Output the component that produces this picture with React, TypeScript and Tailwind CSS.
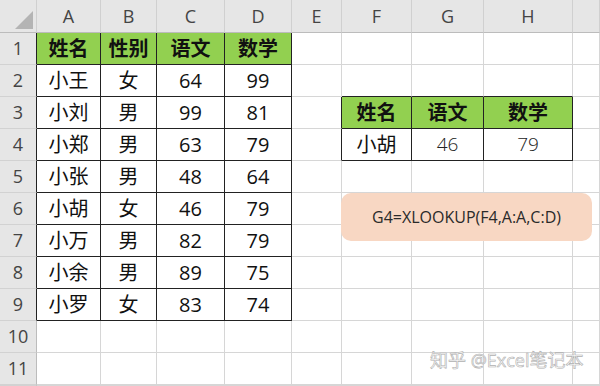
import React from 'react';

type Cell = { text: string; head?: boolean; light?: boolean };

const COLS = ['A', 'B', 'C', 'D', 'E', 'F', 'G', 'H', ''];
const ROWS = [1, 2, 3, 4, 5, 6, 7, 8, 9, 10, 11, 12];

// main score table A1:D9
const TABLE: string[][] = [
  ['姓名', '性别', '语文', '数学'],
  ['小王', '女', '64', '99'],
  ['小刘', '男', '99', '81'],
  ['小郑', '男', '63', '79'],
  ['小张', '男', '48', '64'],
  ['小胡', '女', '46', '79'],
  ['小万', '男', '82', '79'],
  ['小余', '男', '89', '75'],
  ['小罗', '女', '83', '74'],
];

function cellAt(r: number, c: number): Cell | null {
  if (r >= 1 && r <= 9 && c <= 3) return { text: TABLE[r - 1][c], head: r === 1 };
  if (r === 3 && c >= 5 && c <= 7) return { text: ['姓名', '语文', '数学'][c - 5], head: true };
  if (r === 4 && c === 5) return { text: '小胡' };
  if (r === 4 && c === 6) return { text: '46', light: true };
  if (r === 4 && c === 7) return { text: '79', light: true };
  return null;
}

function boxed(r: number, c: number) {
  return (r >= 1 && r <= 9 && c >= 0 && c <= 3) || ((r === 3 || r === 4) && c >= 5 && c <= 7);
}

function CornerCell() {
  return (
    <div className="relative border-b border-r border-b-[#bcbcbc] border-r-[#d0d0d0] bg-[#e6e6e6]">
      <svg viewBox="0 0 20 20" className="absolute bottom-[3px] right-[3px] h-[18px] w-[18px]">
        <path d="M20 0 L20 20 L0 20 Z" fill="#b4b4b4" />
      </svg>
    </div>
  );
}

export default function App() {
  return (
    <div className="relative h-[386px] w-[600px] overflow-hidden bg-white font-['Open_Sans','Noto_Sans_CJK_SC',sans-serif]">
      <div className="grid h-full grid-cols-[37px_64px_56px_68px_67px_50px_70px_72px_89px_27px] grid-rows-[33px_repeat(11,32px)_1fr]">
        <CornerCell />
        {COLS.map((col, i) => (
          <div
            key={i}
            className="flex items-center justify-center border-b border-r border-b-[#bcbcbc] border-r-[#d0d0d0] bg-[#e6e6e6] text-[18px] text-[#444]"
          >
            {col}
          </div>
        ))}

        {ROWS.map((r) => (
          <React.Fragment key={r}>
            <div
              className={`flex items-center justify-center border-b border-r border-b-[#d2d2d2] bg-[#e6e6e6] text-[18px] text-[#444] ${
                boxed(r, 0) ? 'border-r-[#222]' : 'border-r-[#bcbcbc]'
              }`}
            >
              {r <= 11 ? r : ''}
            </div>
            {COLS.map((_, c) => {
              const cell = cellAt(r, c);
              const rightDark = boxed(r, c) || boxed(r, c + 1);
              const bottomDark = boxed(r, c) || boxed(r + 1, c);
              return (
                <div
                  key={c}
                  className={`flex items-center justify-center border-b border-r ${
                    rightDark ? 'border-r-[#222]' : 'border-r-[#d6d6d6]'
                  } ${bottomDark ? 'border-b-[#222]' : 'border-b-[#d6d6d6]'} ${
                    cell?.head ? 'bg-[#92d050] font-bold text-[#111]' : ''
                  } ${cell?.light ? 'text-[19px] font-light text-[#222]' : 'text-[20px] text-[#111]'}`}
                >
                  {cell?.text}
                </div>
              );
            })}
          </React.Fragment>
        ))}
      </div>

      {/* formula note */}
      <div className="absolute left-[341px] top-[193px] flex h-[48px] w-[251px] items-center justify-center rounded-[10px] bg-[#f8d7c3] text-[16px] text-[#2a2a2a]">
        G4=XLOOKUP(F4,A:A,C:D)
      </div>

      {/* watermark */}
      <div className="absolute left-[430px] top-[348px] text-[18px] leading-[24px] text-[#fbfbfb] [-webkit-text-stroke:0.6px_#b0b0b0]">
        知乎 @Excel笔记本
      </div>
    </div>
  );
}
